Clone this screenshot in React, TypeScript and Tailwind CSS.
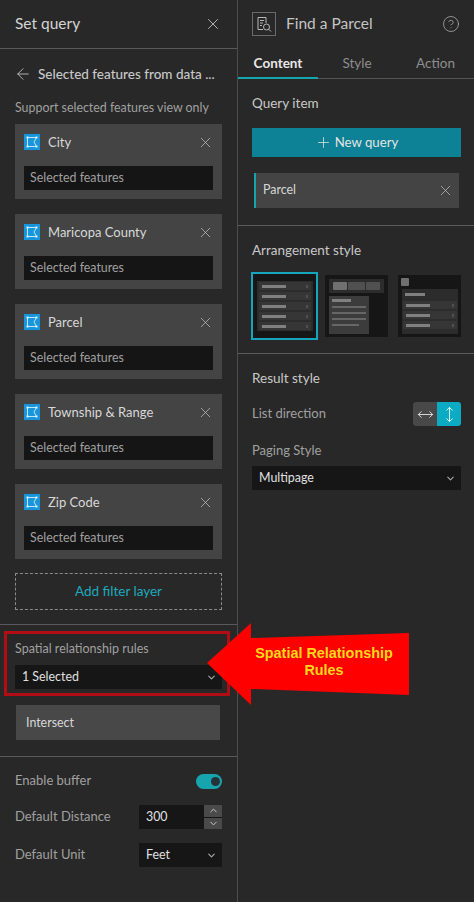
import React from "react";
import { ArrowLeft, ChevronDown, ChevronUp, CircleHelp, MoveHorizontal, MoveVertical, Plus, X } from "lucide-react";

const layers = ["City", "Maricopa County", "Parcel", "Township & Range", "Zip Code"];

const LayerIcon = () => (
  <svg width="16" height="16" viewBox="0 0 16 16" className="shrink-0">
    <rect width="16" height="16" fill="#1796dc" />
    <path d="M3.5 3.5H12.5L10 8L12.5 12.5H3.5Z" fill="none" stroke="#bfe6fa" strokeWidth="1" />
    <rect x="2.5" y="2.5" width="2" height="2" fill="#d8f0fb" />
    <rect x="11.5" y="2.5" width="2" height="2" fill="#d8f0fb" />
    <rect x="2.5" y="11.5" width="2" height="2" fill="#d8f0fb" />
    <rect x="11.5" y="11.5" width="2" height="2" fill="#d8f0fb" />
  </svg>
);

const LayerCard = ({ name }: { name: string }) => (
  <div className="h-[75px] bg-[#444444] px-[9px] pt-[9px]">
    <div className="flex h-[18px] items-center">
      <LayerIcon />
      <span className="ml-2 flex-1 pt-[2px] text-[13px] text-[#d8d8d8]">{name}</span>
      <X size={17} strokeWidth={1} className="-mr-[1px] text-[#c4c4c4]" />
    </div>
    <div className="mt-[15px] flex h-[24px] items-center bg-[#151515] px-[6px] text-[12.4px] text-[#a0a0a0]">
      Selected features
    </div>
  </div>
);

const DarkSelect = ({ label, className }: { label: string; className: string }) => (
  <div className={`flex h-[24px] items-center justify-between bg-[#161616] pl-[7px] pr-[5px] text-[12.4px] text-[#e0e0e0] ${className}`}>
    {label}
    <ChevronDown size={11} strokeWidth={2.5} className="text-[#a8a8a8]" />
  </div>
);

// small mock rows for the arrangement thumbnails
const ThumbRow = ({ w = "w-[24px]" }: { w?: string }) => (
  <div className="flex h-[8px] items-center justify-between bg-[#363636] px-[3px]">
    <div className={`h-[3px] bg-[#808080] ${w}`} />
    <div className="h-[3px] w-[2px] bg-[#505050]" />
  </div>
);

const App = () => {
  return (
    <div className="relative flex h-[902px] w-[474px] overflow-hidden bg-[#282828] font-['Lato','Noto_Sans',sans-serif]">
      {/* left panel */}
      <div className="w-[238px] shrink-0 border-r border-[#4d4d4d]">
        <div className="flex h-[49px] items-center justify-between border-b border-[#5a5a5a] pl-[15px] pr-[15px]">
          <span className="text-[15.5px] text-[#d4d4d4]">Set query</span>
          <X size={18} strokeWidth={1.1} className="text-[#cfcfcf]" />
        </div>
        <div className="mt-[16px] flex h-[18px] items-center pl-[14px]">
          <ArrowLeft size={18} strokeWidth={1.1} className="text-[#cfcfcf]" />
          <span className="ml-[6px] text-[13.5px] font-medium text-[#c8c8c8]">Selected features from data ...</span>
        </div>
        <div className="mt-[16px] pl-[15px] text-[12.4px] leading-[18px] text-[#a0a0a0]">Support selected features view only</div>
        <div className="mx-[15px] mt-[7px] flex flex-col gap-[15px]">
          {layers.map((l) => (
            <LayerCard key={l} name={l} />
          ))}
        </div>
        <div className="mx-[15px] mt-[14px] flex h-[37px] items-center justify-center border border-dashed border-[#8a8a8a] text-[13.5px] text-[#1fa9bd]">
          Add filter layer
        </div>
        <div className="mt-[14px] h-px bg-[#5a5a5a]" />
        <div className="ml-[4px] mt-[6px] h-[65px] w-[226px] border-[3px] border-[#b00d14] pl-[8px] pr-[4px] pt-[6px]">
          <div className="text-[12.5px] leading-[17px] text-[#a0a0a0]">Spatial relationship rules</div>
          <DarkSelect label="1 Selected" className="mt-[8px] w-[207px]" />
        </div>
        <div className="ml-[16px] mt-[9px] flex h-[35px] w-[204px] items-center bg-[#484848] pl-[10px] pt-[2px] text-[12.4px] text-[#d8d8d8]">
          Intersect
        </div>
        <div className="mt-[16px] h-px bg-[#5a5a5a]" />
        <div className="px-[15px]">
          <div className="mt-[16px] flex h-[16px] items-center justify-between text-[13px] text-[#a0a0a0]">
            Enable buffer
            <div className="flex h-[15px] w-[26px] items-center justify-end rounded-full bg-[#17a5ad] pr-[2px]">
              <div className="h-[9px] w-[9px] rounded-full bg-[#263238]" />
            </div>
          </div>
          <div className="mt-[16px] flex h-[24px] items-center justify-between text-[13px] text-[#a0a0a0]">
            Default Distance
            <div className="flex h-[24px] w-[83px] items-center justify-between bg-[#161616] pl-[7px] text-[12.4px] text-[#e0e0e0]">
              300
              <div className="flex h-[24px] w-[18px] flex-col gap-px">
                <div className="flex flex-1 items-center justify-center bg-[#4a4a4a]">
                  <ChevronUp size={11} strokeWidth={2} className="text-[#d0d0d0]" />
                </div>
                <div className="flex flex-1 items-center justify-center bg-[#4a4a4a]">
                  <ChevronDown size={11} strokeWidth={2} className="text-[#d0d0d0]" />
                </div>
              </div>
            </div>
          </div>
          <div className="mt-[14px] flex h-[24px] items-center justify-between text-[13px] text-[#a0a0a0]">
            Default Unit
            <DarkSelect label="Feet" className="w-[83px]" />
          </div>
        </div>
      </div>

      {/* right panel */}
      <div className="flex-1">
        <div className="flex h-[47px] items-center pl-[14px] pr-[15px]">
          <div className="flex h-[24px] w-[24px] items-center justify-center border border-[#6a6a6a]">
            <svg width="16" height="16" viewBox="0 0 16 16" fill="none" stroke="#b8b8b8" strokeWidth="1">
              <path d="M10 7V1.5H2V13.5H7" />
              <path d="M4 4.5H8M4 7H7M4 9.5H6" />
              <circle cx="10.5" cy="11" r="3" />
              <path d="M12.7 13.2L15 15.5" />
            </svg>
          </div>
          <span className="ml-[10px] flex-1 text-[15.5px] text-[#c4c4c4]">Find a Parcel</span>
          <CircleHelp size={18} strokeWidth={1} className="text-[#b0b0b0]" />
        </div>
        <div className="flex h-[32px] border-b border-[#555555] text-[13.5px]">
          <div className="-mb-px flex h-[32px] w-[80px] items-center justify-center border-b-2 border-[#17a5ad] pt-[3px] font-bold text-[#e8e8e8]">
            Content
          </div>
          <div className="flex w-[78px] items-center justify-center pt-[1px] text-[#8e8e8e]">Style</div>
          <div className="flex flex-1 items-center justify-center pt-[1px] text-[#8e8e8e]">Action</div>
        </div>
        <div className="px-[14px]">
          <div className="mt-[15px] text-[13.5px] leading-[18px] text-[#c8c8c8]">Query item</div>
          <div className="mt-[16px] flex h-[29px] w-[209px] items-center justify-center gap-[3px] bg-[#0d8195] text-[13.2px] text-[#e4e4e4]">
            <Plus size={17} strokeWidth={1.1} />
            New query
          </div>
          <div className="ml-[2px] mt-[16px] flex h-[35px] w-[205px] items-center justify-between border-l-2 border-[#17a5ad] bg-[#444444] pl-[7px] pr-[5px] text-[12.4px] text-[#d8d8d8]">
            Parcel
            <X size={17} strokeWidth={1} className="text-[#c4c4c4]" />
          </div>
        </div>
        <div className="mt-[17px] h-px bg-[#5a5a5a]" />
        <div className="px-[14px]">
          <div className="mt-[15px] text-[13.5px] leading-[18px] text-[#c8c8c8]">Arrangement style</div>
          <div className="ml-[-1px] mt-[13px] flex items-center">
            <div className="flex h-[68px] w-[67px] items-center justify-center border-2 border-[#17a5bd] bg-[#161616]">
              <div className="flex w-[56px] flex-col gap-[2px] bg-[#2c2c2c] px-[2px] py-[1px]">
                <ThumbRow />
                <ThumbRow />
                <ThumbRow />
                <ThumbRow />
                <ThumbRow />
              </div>
            </div>
            <div className="ml-[7px] h-[62px] w-[63px] bg-[#161616] px-[4px] pt-[4px]">
              <div className="flex h-[14px] items-center gap-[1px] bg-[#2c2c2c] px-[4px]">
                <div className="h-[8px] w-[14px] rounded-[1px] bg-[#707070]" />
                <div className="h-[8px] w-[18px] rounded-[1px] bg-[#505050]" />
                <div className="h-[8px] w-[14px] rounded-[1px] bg-[#505050]" />
              </div>
              <div className="mt-[3px] flex h-[38px] w-[40px] flex-col gap-[4px] bg-[#3c3c3c] p-[3px]">
                <div className="h-[3px] w-[19px] bg-[#808080]" />
                <div className="h-[2px] bg-[#666666]" />
                <div className="h-[2px] bg-[#666666]" />
                <div className="h-[2px] bg-[#666666]" />
                <div className="h-[2px] w-[27px] bg-[#666666]" />
              </div>
            </div>
            <div className="ml-[10px] h-[62px] w-[63px] bg-[#161616] px-[3px] pt-[3px]">
              <div className="h-[8px] w-[8px] rounded-[1px] bg-[#707070]" />
              <div className="ml-[1px] mt-[3px] flex h-[45px] flex-col gap-[2px] bg-[#2c2c2c] p-[1px]">
                <div className="flex h-[9px] items-center px-[2px]">
                  <div className="h-[3px] w-[20px] bg-[#808080]" />
                </div>
                <ThumbRow />
                <ThumbRow />
                <ThumbRow />
              </div>
            </div>
          </div>
        </div>
        <div className="mt-[13px] h-px bg-[#5a5a5a]" />
        <div className="px-[14px]">
          <div className="mt-[15px] text-[13.5px] leading-[18px] text-[#c8c8c8]">Result style</div>
          <div className="mt-[15px] flex h-[24px] items-center justify-between text-[13px] text-[#a0a0a0]">
            List direction
            <div className="flex">
              <div className="flex h-[24px] w-[24px] items-center justify-center rounded-l-[3px] bg-[#484848]">
                <MoveHorizontal size={17} strokeWidth={1.3} className="text-[#e0e0e0]" />
              </div>
              <div className="flex h-[24px] w-[24px] items-center justify-center rounded-r-[3px] bg-[#0cabc4]">
                <MoveVertical size={17} strokeWidth={1.3} className="text-[#e8f8fa]" />
              </div>
            </div>
          </div>
          <div className="mt-[14px] text-[13px] leading-[20px] text-[#a0a0a0]">Paging Style</div>
          <DarkSelect label="Multipage" className="mt-[6px] w-[209px]" />
        </div>
      </div>

      {/* callout arrow over the panels */}
      <svg width="474" height="902" viewBox="0 0 474 902" className="pointer-events-none absolute left-0 top-0">
        <path d="M207 663L251 623V638L409 633V695L251 689V705Z" fill="#fe0000" />
      </svg>
      <div className="absolute left-[235px] top-[645px] w-[178px] text-center font-['Liberation_Sans',sans-serif] text-[14.4px] font-bold leading-[17px] text-[#ffd91a]">
        Spatial Relationship
        <br />
        Rules
      </div>
    </div>
  );
};

export default App;
